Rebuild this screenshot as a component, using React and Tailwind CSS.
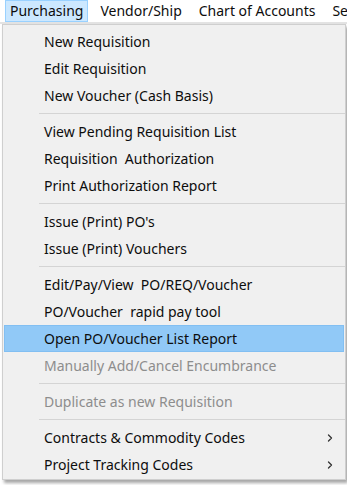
import { ChevronRight } from 'lucide-react'

const GROUPS = [
  [
    { label: 'New Requisition' },
    { label: 'Edit Requisition' },
    { label: 'New Voucher (Cash Basis)' },
  ],
  [
    { label: 'View Pending Requisition List' },
    { label: 'Requisition\u00a0 Authorization' },
    { label: 'Print Authorization Report' },
  ],
  [
    { label: "Issue (Print) PO's" },
    { label: 'Issue (Print) Vouchers' },
  ],
  [
    { label: 'Edit/Pay/View\u00a0 PO/REQ/Voucher' },
    { label: 'PO/Voucher\u00a0 rapid pay tool' },
    { label: 'Open PO/Voucher List Report', active: true },
    { label: 'Manually Add/Cancel Encumbrance', disabled: true },
  ],
  [{ label: 'Duplicate as new Requisition', disabled: true }],
  [
    { label: 'Contracts & Commodity Codes', sub: true },
    { label: 'Project Tracking Codes', sub: true },
  ],
]

const TOP = ['Purchasing', 'Vendor/Ship', 'Chart of Accounts', 'Setup']

export default function App() {
  return (
    <div className="w-[347px] h-[485px] bg-white overflow-hidden text-[14px] text-[#0d0d0d]" style={{ fontFamily: '"Noto Sans", "Open Sans", sans-serif' }}>
      {/* barra de menú */}
      <div className="flex h-[22px] pl-[5px] whitespace-nowrap overflow-hidden">
        {TOP.map((t, i) => (
          <div
            key={t}
            className={`flex items-center px-[4px] leading-none ${i === 0 ? 'bg-[#cce8ff] border border-[#99d1ff]' : 'border border-transparent'} ${i === 1 ? 'ml-[7px]' : ''} ${i > 1 ? 'ml-[7px]' : ''}`}
          >
            {t}
          </div>
        ))}
      </div>
      <div className="h-[2px] bg-[#e3e3e3]" />

      {/* desplegable */}
      <div className="ml-[2px] mr-[1px] h-[456px] bg-[#f0f0f0] border border-[#cfcfcf] pt-[3px] shadow-[2px_3px_3px_rgba(0,0,0,0.35)]">
        {GROUPS.map((g, gi) => (
          <div key={gi}>
            {gi > 0 && (
              <div className="h-[9px] flex items-center pl-[36px]">
                <div className="h-px w-full bg-[#d4d4d4]" />
              </div>
            )}
            {g.map((it) => (
              <div
                key={it.label}
                className={`h-[27px] flex items-center pr-[9px] whitespace-nowrap ${it.active ? 'bg-[#91c9f7] border border-[#82bff2] mx-[1px] pl-[39px]' : 'pl-[41px]'} ${it.disabled ? 'text-[#8d8d8d]' : ''}`}
              >
                <span className="flex-1">{it.label}</span>
                {it.sub && <ChevronRight size={12} strokeWidth={2.6} className="text-[#333]" />}
              </div>
            ))}
          </div>
        ))}
      </div>
    </div>
  )
}
